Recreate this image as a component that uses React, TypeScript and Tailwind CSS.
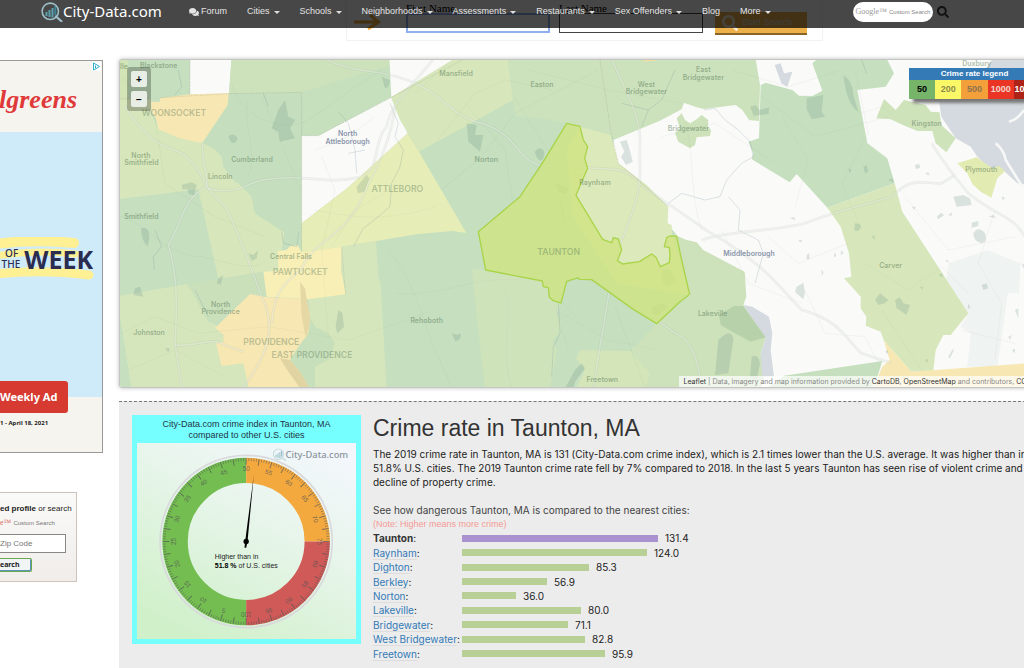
import { FaComments, FaSearch } from "react-icons/fa"

interface ICity {
  name: string;
  value: number;
}

interface IShape {
  fill: string;
  points: string;
}

interface ILabel {
  text: string;
  x: number;
  y: number;
  big?: boolean;
  water?: boolean;
}

const menu = [
  { text: "Cities", caret: true },
  { text: "Schools", caret: true },
  { text: "Neighborhoods", caret: true },
  { text: "Assessments", caret: true },
  { text: "Restaurants", caret: true },
  { text: "Sex Offenders", caret: true },
  { text: "Blog", caret: false },
  { text: "More", caret: true },
];

const cities: ICity[] = [
  { name: "Taunton", value: 131.4 },
  { name: "Raynham", value: 124 },
  { name: "Dighton", value: 85.3 },
  { name: "Berkley", value: 56.9 },
  { name: "Norton", value: 36 },
  { name: "Lakeville", value: 80 },
  { name: "Bridgewater", value: 71.1 },
  { name: "West Bridgewater", value: 82.8 },
  { name: "Freetown", value: 95.9 },
];

const legend = [
  { value: "50", style: "bg-[#76b469] text-black" },
  { value: "200", style: "bg-[#fbf868] text-[#8c8a50]" },
  { value: "500", style: "bg-[#f3a03b] text-[#8d7350]" },
  { value: "1000", style: "bg-[#ea3524] text-[#f3d5d0]" },
  { value: "10000", style: "bg-[#ad2317] text-white" },
];

const DARK = "#c5dfbf";
const LIGHT = "#cde2bb";
const LIME = "#d7e7bb";
const YELLOW = "#e6edb7";
const SAND = "#f8efb7";
const ORANGE = "#f7e7b3";
const WATER = "#d4dadf";

// west third of the map
const westShapes: IShape[] = [
  { fill: DARK, points: "0,20 1720,20 1720,1020 0,1020" },
  { fill: "#d3e4b6", points: "0,20 40,20 40,147 0,147" },
  { fill: DARK, points: "40,20 225,20 225,133 130,142 108,147 40,147" },
  { fill: "#fafaf9", points: "225,20 350,20 342,131 225,133" },
  { fill: LIGHT, points: "350,20 825,20 825,50 560,127 342,131" },
  { fill: "#c6e0be", points: "560,127 825,45 829,142 610,257 560,257" },
  { fill: LIME, points: "0,147 108,147 108,190 130,238 185,262 262,278 295,295 320,318 325,350 375,405 410,440 420,490 460,515 508,545 505,575 500,598 490,605 490,662 445,665 310,687 250,418 0,449" },
  { fill: "#c5dfbe", points: "341,130 560,127 560,607 540,586 520,590 505,575 508,545 495,540 460,515 430,498 418,480 410,440 390,410 360,395 325,350 320,318 295,295 262,278 338,165" },
  { fill: ORANGE, points: "108,155 133,156 136,144 225,133 341,130 338,165 300,222 262,278 225,272 185,262 130,238 122,205 110,190" },
  { fill: "#cae0bb", points: "215,702 445,665 455,740 405,732 298,820 280,815 265,790 240,740" },
  { fill: "#d5e6bc", points: "0,740 215,702 240,740 265,790 280,815 300,822 325,860 325,1020 50,1020 12,780 0,770" },
  { fill: "#d5e6bc", points: "300,940 400,930 410,1020 300,1020" },
  { fill: "#fafaf9", points: "560,257 610,257 829,142 878,250 700,412 560,520" },
  { fill: "#fafaf9", points: "823,20 1048,20 829,142" },
  { fill: YELLOW, points: "878,250 912,305 1054,549 1010,543 905,553 680,590 560,607 560,520 700,412" },
  { fill: "#d5e6bc", points: "680,590 783,573 790,680 797,700 815,1020 590,1020 530,930 560,890 585,790 580,745 692,733 678,660" },
  { fill: "#c7dfba", points: "583,800 600,830 640,850 660,880 640,930 600,950 600,1020 560,1020 520,930 575,860" },
  { fill: SAND, points: "488,603 515,600 525,588 548,586 560,607 680,590 678,660 692,733 580,748 455,740 445,665 490,662" },
  { fill: ORANGE, points: "405,732 455,742 575,747 586,800 580,850 550,890 525,930 555,965 587,1020 403,1020 395,985 385,940 320,948 303,880 325,875 325,855 300,833" },
  { fill: "#e5d8a5", points: "555,695 570,715 575,747 586,800 580,840 572,860 560,800" },
  { fill: "#e0d4a2", points: "495,925 525,930 555,965 587,1020 560,1020 520,965" },
];

const middleShapes: IShape[] = [
  { fill: LIME, points: "173,20 322,20 340,150 57,305 0,210 -27,142" },
  { fill: "#cce2bc", points: "322,20 1080,20 1067,27 1080,105 1077,213 1047,210 1027,180 1007,165 912,177 890,172 852,158 845,178 780,212 640,270 632,255 540,230 440,207 345,198" },
  { fill: "#f8dd9f", points: "730,20 768,20 766,32 730,34" },
  { fill: "#dce9ba", points: "540,230 632,255 645,300 655,340 740,405 805,470 803,520 815,525 817,557 870,735 650,700 520,500 500,300" },
  { fill: LIGHT, points: "845,190 855,210 870,220 890,208 905,195 925,210 924,230 933,240 930,258 890,262 885,285 870,295 835,275 825,250 840,235 830,205" },
  { fill: "#cfe3bb", points: "215,655 430,693 447,715 450,745 483,760 470,790 483,820 480,850 458,870 470,900 450,1020 255,1020 228,780" },
  { fill: LIGHT, points: "770,820 870,735 830,557 860,570 890,577 910,600 1034,665 1039,740 1030,765 1097,865 1082,910 1092,980 1082,1020 735,1020 750,970 690,903" },
  { fill: "#d3e5b9", points: "540,900 690,903 750,970 735,1020 525,1020 555,960 528,925" },
];

const eastShapes: IShape[] = [
  { fill: WATER, points: "870,20 1075,20 1075,420 940,400 900,363 870,365 820,320 800,290 755,265 735,235 712,200 705,150 830,80" },
  { fill: "#eff3f1", points: "735,640 850,600 950,640 945,730 912,730 880,950 790,950 800,850 770,830 793,790 725,690" },
  { fill: "#c6e0bf", points: "340,27 325,40 355,122 325,138 285,137 265,120 185,98 170,105 165,265 133,275 148,310 143,328 257,397 278,372 370,473 572,400 550,325 490,280 460,120 545,110 570,70 545,20 340,20" },
  { fill: LIME, points: "370,473 572,400 595,485 793,790 740,855 718,855 695,900 688,962 622,965 540,872 530,845 485,827 487,800 470,775 470,740 420,685 442,680 435,610 410,530" },
  { fill: DARK, points: "240,977 535,933 520,980 500,1020 180,1020" },
  { fill: ORANGE, points: "540,872 622,965 1075,932 1075,1020 505,1020 535,950 557,930" },
  { fill: "#cfe3bb", points: "517,205 540,147 575,180 600,150 665,165 680,185 707,187 712,225 755,265 727,307 695,280 685,243 640,243 590,222 560,208" },
  { fill: "#e2ebb2", points: "760,340 818,322 865,355 885,348 903,363 880,385 862,443 830,425 805,402 790,370" },
  { fill: WATER, points: "118,765 145,770 195,800 205,850 200,900 210,980 175,980 170,910 185,865" },
  { fill: "#b7d2ab", points: "45,795 90,768 118,768 185,862 140,875 85,845 50,825" },
  { fill: WATER, points: "212,45 230,40 240,70 265,65 250,110 232,100" },
];

const tauntonBorder =
  "500,220 540,229 550,270 563,290 554,325 563,355 545,395 528,436 608,568 635,578 640,563 655,567 665,600 652,632 668,642 718,635 755,612 768,622 781,650 808,638 810,615 808,593 793,590 800,563 810,558 830,559 845,630 869,733 840,755 770,821 700,778 575,689 537,688 535,683 500,694 483,759 460,752 448,742 445,713 430,710 427,693 257,660 235,545 360,440 430,335";

const highways = [
  "M30,170 C90,260 120,280 190,305 C260,340 250,400 330,470 C380,560 400,640 440,740 C480,820 470,900 385,1011",
  "M262,280 C262,340 280,380 275,410 C200,450 210,500 160,585 C180,650 190,720 180,880 L200,1011",
  "M275,415 C380,440 400,390 460,388 C560,370 640,405 730,382 C800,370 770,280 815,230 C825,160 900,100 955,27",
  "M470,820 C480,700 530,690 560,655 C600,560 700,570 760,400 C800,330 830,250 840,170",
  "M635,30 C720,70 800,60 860,85 C980,120 1000,190 1080,215 C1200,240 1200,320 1270,345 L1500,358 C1570,370 1560,400 1600,420 L1780,545 C1950,640 2000,720 2060,780 C2180,810 2200,880 2240,910 L2330,940",
  "M1490,27 C1520,100 1580,200 1575,280 C1570,400 1600,380 1500,620 L1435,1011",
  "M1760,570 C1850,540 1980,545 2070,520 C2170,480 2270,460 2330,440 C2390,380 2410,400 2480,400 L2520,375",
  "M2450,280 C2480,330 2510,370 2560,430 C2640,500 2700,490 2740,580",
  "M180,885 C250,890 290,860 330,885 L385,905",
  "M1490,690 C1600,780 1640,830 1700,860 C1750,900 1745,960 1765,1011",
];

const minorRoads = [
  "M20,80 L120,200 L150,400 L300,500 L450,560",
  "M15,500 C100,520 150,620 260,620 C350,640 400,660 440,640",
  "M20,850 L120,800 L250,850 L460,830 L700,870 L960,780",
  "M40,960 L180,900 L330,980",
  "M350,100 C380,200 480,240 560,220 C620,190 700,120 800,60",
  "M400,150 C380,220 430,300 400,380 M440,140 L520,330 L560,430",
  "M600,300 L700,260 L780,200 M620,320 L660,420 L620,600 L640,860",
  "M860,400 L720,480 L650,590 M600,480 C700,500 800,520 960,470",
  "M820,600 C900,700 920,800 960,900 L1010,1011",
  "M840,730 C1000,740 1060,680 1200,690 L1480,610",
  "M900,130 L1000,40 M960,280 L1080,130 L1170,90 L1310,120",
  "M980,420 L1100,320 L1200,190 L1450,60 M1050,160 L1170,300 L1200,500 L1150,660",
  "M1190,130 L1310,320 L1440,420 M1240,60 L1480,120 L1700,160",
  "M1200,440 L1330,560 L1290,700 L1400,820 M1200,620 L1350,540 L1550,660",
  "M1170,720 C1200,800 1150,880 1190,1011 M1310,740 L1360,900",
  "M1340,790 L1480,870 L1630,900 M1500,770 L1590,1011",
  "M1710,220 C1740,300 1720,420 1760,540 M1640,260 L1800,220 L1980,340",
  "M1850,60 L2020,110 L2180,60 M1940,140 L2100,260 L2320,200",
  "M2000,200 L2080,330 L2040,470 M2220,60 L2260,250 L2180,400 L2240,540",
  "M1820,540 L1900,700 L2060,760 M1960,560 L2050,640 L2200,580",
  "M2070,720 L2130,850 L2250,860 L2300,960",
  "M2250,640 L2380,720 L2480,650 L2560,730 M2300,780 L2420,960",
  "M2380,230 L2300,170 L2240,190 M2370,440 L2500,600 L2700,560",
  "M2540,840 L2700,880 M2640,480 L2590,640 L2660,760 L2640,930",
];

const rivers = [
  "M825,160 L850,220 L840,260 L865,300 L855,350 L830,400 L825,470 L790,500 L745,535 L715,590",
  "M670,185 L700,220 L720,300 L725,370 M700,310 L750,300",
  "M2240,30 L2255,70 M1767,180 L1800,175 L1830,210 L1870,240 L1905,275 L1915,320 L1880,340 L1835,390 L1815,440 L1770,450 L1700,430 L1660,460",
  "M1840,440 L1875,480 L1870,540 L1930,570 L1945,610 L1920,700",
  "M500,545 L505,580 L545,590 L552,545 M240,720 L280,800",
  "M120,540 L140,590 L115,620 L118,660 M445,130 L460,170 M190,60 L200,110 L180,135",
  "M1330,760 L1335,850 L1315,890 L1310,980 M1335,460 L1350,510",
  "M1520,160 L1600,180 L1580,230 M1680,60 L1640,150 L1600,180",
];

const ponds = [
  "M490,180 l20,-30 l10,50 l20,10 l-15,25 l15,30 l-45,10 l-5,-30 l-20,-10z",
  "M340,260 q15,-15 28,5 q-5,20 -20,12z",
  "M200,405 l30,-8 l15,8 l-8,30 l-15,-2 l-5,-15 l-15,0z",
  "M725,410 l30,-35 l8,10 l-15,40 l-20,5z",
  "M78,535 q25,-10 25,30 l-5,25 q-20,-20 -20,-55z",
  "M400,610 l15,5 l15,-15 l-5,25 l-15,8z",
  "M1055,220 l30,5 l-5,30 l25,0 l-10,50 l-35,-30z",
  "M1260,305 q15,-20 28,0 q0,30 -15,25 q-12,-10 -13,-25z",
  "M1320,400 l20,5 l20,10 l-10,18 l-20,-8z",
  "M1010,850 l15,5 l12,-5 l0,15 l-15,10z",
  "M800,80 l25,10 l-5,20 l-10,5z",
  "M310,685 l15,-10 l-8,30 l-12,-5z",
  "M1515,275 l20,-5 l8,25 l10,40 l-20,10 l-15,-25 l10,-15z",
  "M1640,660 l20,-5 l15,20 l10,20 l-30,15 l-15,-20z",
  "M1610,770 l30,-10 l20,10 l-30,25 l-20,-5z",
  "M1380,960 l20,-20 l10,15 l-30,40 l-10,40 l-20,-20z",
  "M1905,170 l18,-5 l10,15 l30,-8 l-2,20 l-45,5z",
  "M2075,145 l50,-10 l-5,50 l10,15 l-40,8 l-15,-30z",
  "M2185,75 q30,20 30,60 l15,50 q-35,-20 -45,-110z",
  "M2280,750 l15,-20 l25,20 l-10,10 l-20,5z",
  "M2340,750 l15,-8 l10,18 l20,5 l-10,30 l-30,-20z",
  "M2515,440 l30,-5 l20,10 l5,20 l-45,5z",
  "M2575,550 q15,-25 35,0 q10,25 -10,30 q-25,-5 -25,-30z",
  "M2570,518 l20,-5 l0,15 l-20,5z M2600,705 l15,-5 l5,15 l-15,5z",
  "M2045,710 l20,-12 l5,30 l-5,20 l-25,-22z M2075,615 l8,-5 l0,18 l-8,0z",
  "M1810,870 q40,-40 45,0 l-15,100 l-40,5z M1910,920 q20,-10 25,20 l-10,50 l-20,-10z",
  "M2220,520 q15,0 18,10 q-10,20 -20,10z M2245,350 l10,-5 l5,20 l-10,5z",
  "M2120,660 q10,5 0,18z M2680,860 l10,-5 l-5,15z M2700,780 l10,-5 l0,30z",
  "M60,715 l15,-5 l10,30 l-30,-5z M150,895 l15,0 l-5,12z M670,780 l12,10 l5,40 l-20,20 l-5,-20z",
  "M2400,345 l12,-4 l4,12 l-14,4z M2430,372 l10,-6 l4,10z M2465,500 l14,-12 l8,8 l-18,12z M2500,495 l10,-8 l0,12z",
  "M2320,390 l12,-6 l4,14z M2200,355 l10,4 l-6,12z M2270,560 l8,-4 l2,14z M2180,600 l6,10 l-10,4z M2390,470 l12,0 l-4,10z",
  "M2025,505 l12,-4 l4,10z M2050,570 l12,0 l-6,8z M2160,605 l4,14 l-8,2z M2620,500 l16,-6 l6,10z M2660,440 l10,2 l-6,10z",
  "M2470,675 l12,-6 l2,14z M2490,630 l8,0 l4,10z M2415,710 l10,0 l-4,10z M2560,760 l6,14 l-8,2z M2430,930 l8,-4 l0,14z",
  "M2500,920 l14,-24 l2,6 l-12,24z M2690,900 l10,-4 l0,14z M2720,640 l8,4 l-2,14z M2310,905 l8,-6 l2,14z",
];

const labels: ILabel[] = [
  { text: "Blackstone", x: 131, y: 54 },
  { text: "lle", x: 27, y: 56 },
  { text: "WOONSOCKET", x: 177, y: 198, big: true },
  { text: "North", x: 78, y: 323 },
  { text: "Smithfield", x: 79, y: 345 },
  { text: "Cumberland", x: 411, y: 335 },
  { text: "Lincoln", x: 316, y: 388 },
  { text: "Smithfield", x: 79, y: 507 },
  { text: "North", x: 698, y: 259, water: true },
  { text: "Attleborough", x: 698, y: 281, water: true },
  { text: "ATTLEBORO", x: 847, y: 425, big: true },
  { text: "Central Falls", x: 528, y: 627 },
  { text: "PAWTUCKET", x: 556, y: 675, big: true },
  { text: "North", x: 317, y: 771 },
  { text: "Providence", x: 317, y: 793 },
  { text: "Johnston", x: 102, y: 855 },
  { text: "PROVIDENCE", x: 469, y: 885, big: true },
  { text: "EAST PROVIDENCE", x: 591, y: 925, big: true },
  { text: "Mansfield", x: 1023, y: 79 },
  { text: "Easton", x: 1281, y: 112 },
  { text: "West", x: 1594, y: 111 },
  { text: "Bridgewater", x: 1594, y: 133 },
  { text: "East", x: 1765, y: 67 },
  { text: "Bridgewater", x: 1765, y: 89 },
  { text: "Bridgewater", x: 1720, y: 244 },
  { text: "Norton", x: 1114, y: 335 },
  { text: "Raynham", x: 1440, y: 404 },
  { text: "TAUNTON", x: 1331, y: 614, big: true },
  { text: "Rehoboth", x: 935, y: 820 },
  { text: "Freetown", x: 1462, y: 995 },
  { text: "Lakeville", x: 1793, y: 798 },
  { text: "Middleborough", x: 1902, y: 617, water: true },
  { text: "Carver", x: 2327, y: 655 },
  { text: "Duxbury", x: 2585, y: 47 },
  { text: "Kingston", x: 2435, y: 228 },
  { text: "Plymouth", x: 2599, y: 367 },
];

function Caret() {
  return <span className="border-x-[3px] border-t-[3px] border-x-transparent border-t-[#ddd]" />
}

function LogoMark({ className }: { className: string }) {
  return (
    <svg viewBox="0 0 22 20" className={className} fill="none">
      <rect x="4.5" y="10" width="2" height="4" fill="#5d9fae" />
      <rect x="7.5" y="8" width="2" height="7" fill="#5d9fae" />
      <rect x="10.5" y="6" width="2" height="9.5" fill="#5d9fae" />
      <rect x="13.3" y="4" width="2" height="9" fill="#3e8394" />
      <circle cx="9.3" cy="9.3" r="8.2" stroke="#9dbfc8" strokeWidth="1.6" />
      <path d="M15 14.5L20.5 19.3" stroke="#9dbfc8" strokeWidth="2.2" strokeLinecap="round" />
    </svg>
  )
}

function NavBar() {
  return (
    <nav className="absolute inset-x-0 top-0 z-20 flex h-7 items-start bg-black/72 pl-[41px] text-[9px] text-[#e4e4e4]">
      <a href="#home" className="flex w-[148px] items-start pt-[2px]">
        <LogoMark className="h-5 w-[22px]" />
        <span className="font-['Noto_Sans'] text-[15px] leading-[19px] text-white">City-Data.com</span>
      </a>
      <div className="flex h-6 items-center gap-5 whitespace-nowrap">
        <a href="#forum" className="flex items-center gap-[2px]">
          <FaComments className="size-[10px]" />
          Forum
        </a>
        {menu.map((item) => (
          <a key={item.text} href={`#${item.text}`} className="flex items-center gap-1">
            {item.text}
            {item.caret && <Caret />}
          </a>
        ))}
      </div>
      <form className="ml-[82px] flex h-6 items-center gap-1">
        <label className="flex h-5 w-20 items-center rounded-full bg-white pl-[3px] text-[#999]">
          <span className="font-['Liberation_Serif'] text-[8px]">Google™</span>
          <input type="text" aria-label="Custom Search" placeholder="Custom Search" className="w-[46px] pl-[2px] text-[6px] outline-none placeholder:text-[#888]" />
        </label>
        <button type="submit" aria-label="Search" className="text-[#111]">
          <FaSearch className="size-3" />
        </button>
      </form>
    </nav>
  )
}

function PeopleSearch() {
  return (
    <form className="ml-[346px] flex h-[41px] w-[477px] border border-t-0 border-[#f2f2f2] font-['Liberation_Serif'] text-[11px] text-black">
      <svg viewBox="0 0 28 16" className="mt-[14px] ml-[6px] h-4 w-7" fill="none" stroke="#f0ab3b" strokeWidth="3">
        <path d="M1 8H25M17 1L25.500 8L15 15" />
      </svg>
      <label className="ml-[25px] block w-36">
        <span className="block h-[13px] leading-4">First Name</span>
        <input type="text" className="block h-5 w-full border-2 border-[#8fb0ee] bg-white" />
      </label>
      <label className="ml-[9px] block w-36">
        <span className="block h-[13px] leading-4">Last Name</span>
        <input type="text" className="block h-5 w-full border border-[#444] bg-white" />
      </label>
      <button type="button" className="mt-3 ml-3 flex h-[23px] w-[92px] items-center gap-1 border-b-2 border-[#8a6524] bg-[#ecb14a] pl-[7px] font-['Liberation_Sans'] text-[9px] text-[#ddd]">
        <FaSearch className="size-4 text-white/80" />
        Start Search
      </button>
    </form>
  )
}

function AdBanner() {
  return (
    <div className="flex h-[393px] w-[103px] flex-col overflow-hidden border border-l-0 border-[#999] bg-[#f6f4ef] whitespace-nowrap">
      <div className="relative flex h-[71px] items-center justify-end pr-[25px]">
        <span className="mt-[6px] font-['Liberation_Serif'] text-[26px] leading-none font-bold text-[#e0393a] italic">lgreens</span>
        <svg viewBox="0 0 9 9" className="absolute top-[1px] right-[1px] size-[9px] bg-white" fill="none" stroke="#2fa9c8">
          <path d="M1.500 1L7.500 4.500L1.500 8ZM3.500 3.500V6" />
        </svg>
      </div>
      <div className="relative h-[265px] bg-[#cfebf9]">
        <svg viewBox="0 0 102 44" className="absolute top-[105px] left-0 h-11 w-[102px]" fill="none" stroke="#fef093" strokeLinecap="round">
          <path d="M-5 7Q35 2 74 6" strokeWidth="10" />
          <path d="M-5 19Q40 12 75 17" strokeWidth="7" />
          <path d="M-5 37Q40 32 89 38" strokeWidth="9" />
        </svg>
        <div className="absolute inset-x-0 top-[115px] flex items-center justify-end gap-1 pr-[9px] font-['Noto_Sans'] text-[#2a2c50]">
          <div className="text-right text-[10px] leading-[11px] font-medium">
            <p className="pr-[2px]">OF</p>
            <p>THE</p>
          </div>
          <div className="text-[25px] leading-6 font-bold">WEEK</div>
        </div>
      </div>
      <button type="button" className="relative -mt-4 flex h-8 w-[68px] shrink-0 items-center rounded-r-[3px] bg-[#d63a31] font-['Noto_Sans'] text-[11px] font-bold text-white">Weekly Ad</button>
      <p className="mt-[6px] font-['Noto_Sans'] text-[6px] leading-[8px] font-bold text-[#222]">1 - April 18, 2021</p>
    </div>
  )
}

function ProfileSearch() {
  return (
    <form className="mt-[39px] h-[90px] w-[77px] overflow-hidden border border-l-0 border-[#cdc3bc] bg-linear-to-b from-[#fafaf9] to-[#f0edea] pt-[10px] text-[#222]">
      <div className="text-[8px] leading-3 whitespace-nowrap"><b>ed profile</b> or search</div>
      <div className="mt-[2px] flex items-center gap-[2px] text-[6px] leading-3 text-[#777]">
        <span className="font-['Liberation_Serif'] text-[8px] text-[#d86a5f]">e™</span>
        Custom Search
      </div>
      <input type="text" aria-label="Zip Code" placeholder="Zip Code" className="mt-[5px] block h-[19px] w-[66px] border border-l-0 border-[#888] bg-white text-[8px] placeholder:text-[#777]" />
      <button type="button" className="mt-[5px] block h-[14px] w-8 rounded-r-[2px] border border-l-0 border-[#6aa84f] bg-[#f1f5f6] text-left font-['Noto_Sans'] text-[7px] leading-[10px] font-bold shadow-[inset_-1px_-1px_#5c93b8]">earch</button>
    </form>
  )
}

function Shapes({ shapes }: { shapes: IShape[] }) {
  return (
    <>
      {shapes.map((shape) => (
        <polygon key={shape.points} points={shape.points} fill={shape.fill} />
      ))}
    </>
  )
}

function CrimeMap() {
  return (
    <div className="relative h-[329px] overflow-hidden rounded-[3px] border border-[#c4c6c2] bg-[#fafaf9] shadow-[0_0_4px_#bbb]">
      <svg viewBox="15 30 2808 981" preserveAspectRatio="xMinYMin slice" className="h-full w-full">
        <Shapes shapes={westShapes} />
        <rect x="1720" y="20" width="1110" height="1000" fill="#fafaf9" />
        <polygon points="1495,270 1500,250 1707,158 1760,170 1760,600 1690,560 1500,340" fill="#fafaf9" />
        <g transform="translate(855 0)">
          <Shapes shapes={middleShapes} />
        </g>
        <g transform="translate(1767 0)">
          <Shapes shapes={eastShapes} />
          <path d="M875,280 Q900,300 905,330 L955,410 M915,215 Q940,210 960,180" stroke="#f6f7f6" strokeWidth="8" fill="none" />
        </g>
        <g fill="none" strokeLinejoin="round">
          {minorRoads.map((d) => <path key={d} d={d} stroke="#8aa08a" strokeOpacity="0.12" strokeWidth="2" />)}
          {rivers.map((d) => <path key={d} d={d} stroke="#6f8a9c" strokeOpacity="0.22" strokeWidth="3" />)}
          {highways.map((d) => <path key={d} d={d} stroke="#8b9a85" strokeOpacity="0.16" strokeWidth="8" />)}
          {highways.map((d) => <path key={d} d={d} stroke="#ffffff" strokeOpacity="0.35" strokeWidth="5" />)}
          <path d="M225,30 V133 M15,147 L108,145 M136,143 L342,131 L560,127 V607 M560,257 H610 L829,142 L1048,27 M680,592 L692,733 M1455,30 L1487,240 L1510,340 L1660,470" stroke="#9aa08a" strokeOpacity="0.5" strokeWidth="2" strokeDasharray="4 3" />
        </g>
        {ponds.map((d) => <path key={d} d={d} fill="#6a8b86" fillOpacity="0.22" />)}
        <g transform="translate(855 0)">
          <polygon points={tauntonBorder} fill="#cfe47f" fillOpacity="0.78" stroke="#aad44a" strokeWidth="4" strokeLinejoin="round" />
        </g>
        <g fontFamily="Inter, sans-serif" fontWeight="600" textAnchor="middle">
          {labels.map((label) => (
            <text
              key={label.text + label.x + label.y}
              x={label.x}
              y={label.y}
              fontSize={label.big ? 26 : 21}
              fill={label.water ? "#5f6f8c" : "#5b7a5a"}
              fillOpacity={label.water ? 0.75 : label.big ? 0.4 : 0.5}
            >
              {label.text}
            </text>
          ))}
        </g>
      </svg>
      <div className="absolute top-[7px] left-[7px] flex flex-col gap-1 rounded-[3px] bg-black/25 p-1 text-[10px] font-bold text-black">
        <button type="button" aria-label="Zoom in" className="flex size-4 items-center justify-center rounded-[2px] bg-[#e8ede6]">+</button>
        <button type="button" aria-label="Zoom out" className="flex size-4 items-center justify-center rounded-[2px] bg-[#e8ede6]">−</button>
      </div>
      <div className="absolute top-2 right-[15px] w-[131px] shadow-[4px_4px_3px_#777]">
        <div className="h-3 bg-[#337ab7] text-center text-[8px] leading-3 font-bold text-white">Crime rate legend</div>
        <div className="grid h-[19px] grid-cols-5">
          {legend.map((item) => (
            <div key={item.value} className={`flex items-center justify-center text-[9px] font-bold ${item.style}`}>{item.value}</div>
          ))}
        </div>
      </div>
      <div className="absolute right-0 bottom-0 bg-white/70 px-1 font-['Inter'] text-[7px] leading-[11px] whitespace-nowrap text-[#888]">
        <a href="#leaflet" className="text-[#333]">Leaflet</a> | Data, imagery and map information provided by <a href="#cartodb" className="text-[#333]">CartoDB</a>, <a href="#osm" className="text-[#333]">OpenStreetMap</a> and contributors, <a href="#license" className="text-[#333]">CC-BY-SA</a>
      </div>
    </div>
  )
}

function Gauge() {
  const ticks = Array.from({ length: 200 }, (_, i) => i);
  const steps = Array.from({ length: 20 }, (_, i) => (i + 1) * 5);

  return (
    <svg viewBox="51 128 656 588" className="w-full">
      <defs>
        <linearGradient id="dial" x1="0.2" y1="1" x2="0.8" y2="0">
          <stop offset="0" stopColor="#cff0c8" />
          <stop offset="0.6" stopColor="#e7f5ea" />
          <stop offset="1" stopColor="#f3f7fc" />
        </linearGradient>
      </defs>
      <rect x="51" y="128" width="656" height="588" fill="url(#dial)" />
      <circle cx="378" cy="423" r="258" fill="none" stroke="#d9d9dd" strokeWidth="5" />
      <g fill="none" strokeWidth="76">
        <path d="M378,636A213,213 0 0 1 378,210" stroke="#73bd51" />
        <path d="M378,210A213,213 0 0 1 591,423" stroke="#f4a93f" />
        <path d="M591,423A213,213 0 0 1 378,636" stroke="#d05a57" />
      </g>
      {ticks.map((i) => (
        <line
          key={i}
          x1="378"
          x2="378"
          y1="673"
          y2={i % 5 === 0 ? 653 : 664}
          stroke="#555"
          strokeOpacity="0.7"
          strokeWidth={i % 5 === 0 ? 3 : 2}
          transform={`rotate(${i * 1.8} 378 423)`}
        />
      ))}
      {steps.map((n) => (
        <text
          key={n}
          x="378"
          y="212"
          fontSize="19"
          textAnchor="middle"
          fill="#555"
          fillOpacity="0.8"
          transform={`rotate(${n * 3.6 - 180} 378 423)`}
        >
          {n}
        </text>
      ))}
      <path d="M401,223L382,423L378,442L373,442L375,423Z" fill="#000" />
      <circle cx="378" cy="423" r="8" fill="#000" />
      <text x="284" y="475" fontSize="21" fill="#222">Higher than in</text>
      <text x="284" y="501" fontSize="21" fill="#222"><tspan fontWeight="bold" fill="#000">51.8 %</tspan> of U.S. cities</text>
      <svg x="457" y="144" width="42" height="38" viewBox="0 0 22 20" opacity="0.5">
        <LogoMark className="" />
      </svg>
      <text x="496" y="172" fontSize="28" fontWeight="500" fontFamily="Noto Sans, sans-serif" fill="#8a959b">City-Data.com</text>
    </svg>
  )
}

function CrimeSummary() {
  return (
    <section className="mt-[13px] flex grow items-start border-t border-dashed border-[#777] bg-[#ececec] pt-[13px] pl-[13px]">
      <figure className="w-[229px] shrink-0 bg-[#76ffff] px-[5px] pt-1 pb-[5px]">
        <figcaption className="h-6 text-center text-[9px] leading-[11px] text-[#234]">
          City-Data.com crime index in Taunton, MA<br />compared to other U.S. cities
        </figcaption>
        <Gauge />
      </figure>
      <div className="ml-3 font-['Inter'] text-[10px] leading-[14px] text-[#222]">
        <h1 className="font-['Liberation_Sans'] text-[23px] leading-[26px] text-[#333]">Crime rate in Taunton, MA</h1>
        <p className="mt-[6px] max-w-[664px]">
          The 2019 crime rate in Taunton, MA is 131 (City-Data.com crime index), which is 2.1 times lower than the U.S. average. It was higher than in 51.8% U.S. cities. The 2019 Taunton crime rate fell by 7% compared to 2018. In the last 5 years Taunton has seen rise of violent crime and decline of property crime.
        </p>
        <p className="mt-[14px] text-[#444]">See how dangerous Taunton, MA is compared to the nearest cities:</p>
        <p className="font-['Liberation_Sans'] text-[9px] text-[#f49a96]">(Note: Higher means more crime)</p>
        <table className="h-[130px] border-collapse">
          <tbody>
            {cities.map((city) => (
              <tr key={city.name}>
                <th scope="row" className="w-[89px] p-0 text-left font-normal whitespace-nowrap">
                  {city.name === "Taunton" ? (
                    <b className="text-[#333]">{city.name}</b>
                  ) : (
                    <a href={`#${city.name}`} className="border-b border-[#ddd] text-[#337ab7]">{city.name}</a>
                  )}
                  :
                </th>
                <td className="p-0">
                  <div className="flex items-center gap-[7px]">
                    <div
                      className={city.name === "Taunton" ? "h-[7px] bg-[#a992cf]" : "h-[7px] bg-[#b8cf95]"}
                      style={{ width: Math.round(city.value * 1.49) }}
                    />
                    {city.value.toFixed(1)}
                  </div>
                </td>
              </tr>
            ))}
          </tbody>
        </table>
      </div>
    </section>
  )
}

export default function App() {
  return (
    <div className="relative flex min-h-screen flex-col overflow-hidden bg-white font-['Liberation_Sans',Arial,sans-serif]">
      <NavBar />
      <PeopleSearch />
      <div className="-mr-8 flex grow">
        <aside className="w-[119px] shrink-0 pt-[19px]">
          <AdBanner />
          <ProfileSearch />
        </aside>
        <main className="flex min-w-0 grow flex-col pt-[18px]">
          <CrimeMap />
          <CrimeSummary />
        </main>
      </div>
    </div>
  )
}
